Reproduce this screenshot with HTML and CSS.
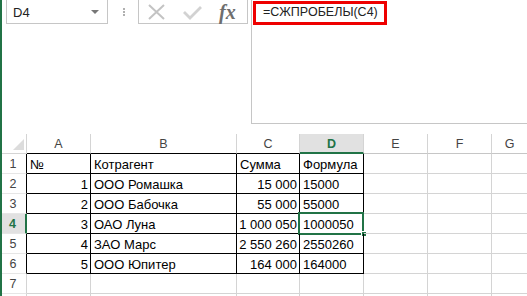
FILE: index.html
```html
<!DOCTYPE html>
<html lang="ru">
<head>
<meta charset="utf-8">
<link rel="stylesheet" href="styles.css">
</head>
<body>
<div class="app">
  <div class="top">
    <div class="tools">
      <div class="namebox"><span class="nb-text">D4</span><span class="nb-arrow"></span></div>
      <div class="grip"><i></i><i></i><i></i></div>
      <div class="fbtns">
        <svg class="ico" width="20" height="16" viewBox="0 0 20 16"><path d="M2 1 L17 15 M17 1 L2 15" stroke="#c3c3c3" stroke-width="2" fill="none"/></svg>
        <svg class="ico" width="20" height="16" viewBox="0 0 20 16"><path d="M1 8 L7 14 L18 3" stroke="#d2d2d2" stroke-width="2.8" fill="none"/></svg>
        <span class="fx">fx</span>
      </div>
    </div>
    <div class="fbar"><div class="formula">=СЖПРОБЕЛЫ(С4)</div></div>
  </div>
  <div class="sheet">
    <div class="c corner"><span class="tri"></span></div>
    <div class="c ch bk">A</div>
    <div class="c ch bk">B</div>
    <div class="c ch bk">C</div>
    <div class="c ch sel">D</div>
    <div class="c ch">E</div>
    <div class="c ch">F</div>
    <div class="c ch last">G</div>

    <div class="c rh bk">1</div>
    <div class="c d">№</div>
    <div class="c d">Котрагент</div>
    <div class="c d">Сумма</div>
    <div class="c d">Формула</div>
    <div class="c"></div><div class="c"></div><div class="c last"></div>

    <div class="c rh bk">2</div>
    <div class="c d r">1</div>
    <div class="c d">ООО Ромашка</div>
    <div class="c d r">15 000</div>
    <div class="c d">15000</div>
    <div class="c"></div><div class="c"></div><div class="c last"></div>

    <div class="c rh bk">3</div>
    <div class="c d r">2</div>
    <div class="c d">ООО Бабочка</div>
    <div class="c d r">55 000</div>
    <div class="c d">55000</div>
    <div class="c"></div><div class="c"></div><div class="c last"></div>

    <div class="c rh rsel">4</div>
    <div class="c d r">3</div>
    <div class="c d">ОАО Луна</div>
    <div class="c d r">1 000 050</div>
    <div class="c d active">1000050<span class="selbox"></span><span class="handle"></span></div>
    <div class="c"></div><div class="c"></div><div class="c last"></div>

    <div class="c rh bk">5</div>
    <div class="c d r">4</div>
    <div class="c d">ЗАО Марс</div>
    <div class="c d r">2 550 260</div>
    <div class="c d">2550260</div>
    <div class="c"></div><div class="c"></div><div class="c last"></div>

    <div class="c rh bk">6</div>
    <div class="c d r">5</div>
    <div class="c d">ООО Юпитер</div>
    <div class="c d r">164 000</div>
    <div class="c d">164000</div>
    <div class="c"></div><div class="c"></div><div class="c last"></div>

    <div class="c rh">7</div>
    <div class="c"></div><div class="c"></div><div class="c"></div><div class="c"></div>
    <div class="c"></div><div class="c"></div><div class="c last"></div>

    <div class="c rh"></div>
    <div class="c"></div><div class="c"></div><div class="c"></div><div class="c"></div>
    <div class="c"></div><div class="c"></div><div class="c last"></div>
  </div>
</div>
</body>
</html>
```

FILE: styles.css
```css
* { box-sizing: border-box; }
html, body { margin: 0; padding: 0; background: #fff; }
body {
  width: 527px;
  height: 296px;
  overflow: hidden;
  font-family: "Liberation Sans", Arial, sans-serif;
}
.app {
  height: 296px;
  border-left: 2px solid #217346;
  display: flex;
  flex-direction: column;
  overflow: hidden;
}
.top {
  height: 134px;
  flex: none;
  display: flex;
  align-items: flex-start;
}
.tools {
  width: 249px;
  flex: none;
  display: flex;
  align-items: flex-start;
}
.namebox {
  margin-left: 4px;
  margin-top: -1px;
  width: 102px;
  height: 25px;
  border: 1px solid #c6c6c6;
  display: flex;
  align-items: center;
  justify-content: space-between;
  padding: 1px 6px 0 6px;
}
.nb-text {
  font-size: 13px;
  color: #222;
}
.nb-arrow {
  width: 0;
  height: 0;
  border-left: 4px solid transparent;
  border-right: 4px solid transparent;
  border-top: 4px solid #777;
  margin-right: 2px;
}
.grip {
  margin-left: 15px;
  margin-top: 8px;
  display: flex;
  flex-direction: column;
  gap: 1px;
}
.grip i {
  display: block;
  width: 2px;
  height: 2px;
  background: #b0b0b0;
}
.fbtns {
  margin-left: 13px;
  margin-top: -1px;
  width: 110px;
  height: 25px;
  border: 1px solid #c6c6c6;
  display: flex;
  align-items: center;
  padding: 0 0 0 8px;
  gap: 16px;
}
.ico { display: block; flex: none; }
.fx {
  font-family: "Liberation Serif", "Times New Roman", serif;
  font-style: italic;
  font-weight: bold;
  font-size: 20px;
  line-height: 22px;
  color: #6e6e6e;
  padding-right: 2px;
}
.fbar {
  flex: 1;
  height: 124px;
  border-left: 1px solid #c6c6c6;
  border-bottom: 1px solid #c6c6c6;
}
.formula {
  margin-left: 1px;
  margin-top: 1px;
  width: 134px;
  height: 24px;
  border: 3px solid #ee0000;
  font-size: 12.5px;
  line-height: 17px;
  padding-left: 7px;
  color: #222;
  white-space: nowrap;
}
.sheet {
  display: grid;
  grid-template-columns: 25px 64px 146px 63px 64px 64px 64px 1fr;
  grid-template-rows: repeat(9, 20px);
}
.c {
  border-right: 1px solid #d4d4d4;
  border-bottom: 1px solid #d4d4d4;
  font-size: 13px;
  line-height: 19px;
  white-space: nowrap;
  color: #000;
  position: relative;
}
.c.last { border-right: none; }
.corner { position: relative; }
.tri {
  position: absolute;
  right: 2px;
  bottom: 3px;
  width: 11px;
  height: 11px;
  background: #dcdcdc;
  clip-path: polygon(100% 0, 100% 100%, 0 100%);
}
.ch {
  text-align: center;
  font-size: 12.5px;
  color: #444;
  line-height: 20px;
  border-bottom-color: #c6c6c6;
}
.ch.bk { border-bottom-color: #000; }
.ch.sel {
  background: #e1e1e1;
  color: #217346;
  font-weight: bold;
  border-bottom: 2px solid #217346;
}
.rh {
  text-align: center;
  font-size: 12.5px;
  color: #444;
  line-height: 20px;
  padding-right: 2px;
  border-bottom-color: #e6e6e6;
}
.rh.bk { border-right-color: #000; }
.rh.rsel {
  background: #e1e1e1;
  color: #217346;
  font-weight: bold;
  border-right: 2px solid #217346;
}
.d {
  border-right-color: #000;
  border-bottom-color: #000;
  padding: 1px 0 0 3px;
}
.d.r {
  text-align: right;
  padding-right: 2px;
  padding-left: 0;
}
.active { position: relative; }
.selbox {
  position: absolute;
  top: -2px;
  left: -2px;
  right: -1px;
  bottom: -2px;
  border: 2px solid #217346;
}
.handle {
  position: absolute;
  right: -4px;
  bottom: -4px;
  width: 6px;
  height: 6px;
  background: #217346;
  border: 1px solid #fff;
}
```
